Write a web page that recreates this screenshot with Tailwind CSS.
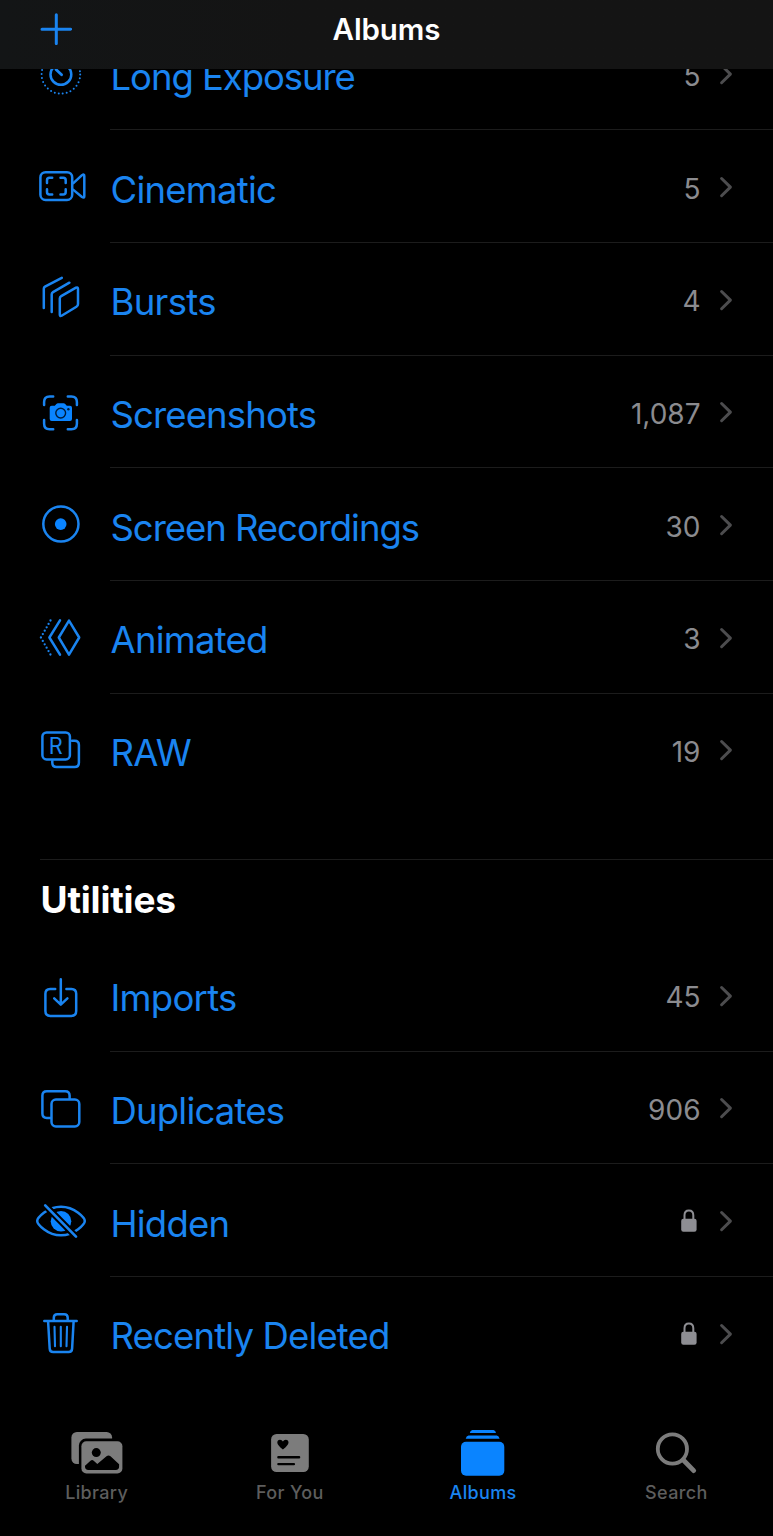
<!DOCTYPE html>
<html lang="en">
<head>
<meta charset="utf-8">
<title>Albums</title>
<script src="https://cdn.jsdelivr.net/npm/@tailwindcss/browser@4"></script>
</head>
<body class="bg-black">
<div class="flex h-[1536px] w-[773px] flex-col overflow-hidden bg-black font-['Inter','Liberation_Sans',sans-serif] text-[#1a84f0]">

  <header class="relative z-10 grid h-[69px] shrink-0 grid-cols-3 items-start bg-linear-to-r from-[#131516] to-[#141414] to-40%">
    <svg class="ml-10 mt-[13px] size-8" viewBox="0 0 32 32" fill="none" stroke="#1a84f0" stroke-width="3" stroke-linecap="round"><path d="M16.3 1.8V30.6M2 16.2H30.6"/></svg>
    <h1 class="mt-[9px] text-center text-[29.5px] leading-10 font-semibold tracking-[-0.1px] text-white">Albums</h1>
  </header>

  <main class="-mt-[51.5px] flex flex-col">
    <ul class="flex flex-col">
      <li class="flex h-[112.7px] pl-[30px]">
        <svg class="mt-[30px] h-[52px] w-[60px]" viewBox="-30 -26 60 52" fill="none" stroke="currentColor" stroke-width="2.5" stroke-linecap="round"><circle cx="0.9" cy="0.4" r="10.4"/><circle cx="0.9" cy="0.4" r="19.3" stroke-width="2" stroke-dasharray="0 4.04"/><path d="M-4-4.6 1.6 0.8" stroke-width="2.8"/></svg>
        <div class="ml-5 flex grow items-center border-b border-[#1c1c1c] pr-[39.5px] pl-[0.5px]">
          <span class="grow pt-[7px] text-[36.5px] leading-[44px] tracking-[-1.06px]">Long Exposure</span>
          <span class="pt-[5px] text-[28px] leading-8 text-[#8b8b8f]">5</span>
          <svg class="ml-[18px] h-6 w-[15px]" viewBox="0 0 15 24" fill="none" stroke="#4c4c4e" stroke-width="3" stroke-linecap="round" stroke-linejoin="round"><path d="M2.6 4.5 11.4 13.1 2.6 21.7"/></svg>
        </div>
      </li>
      <li class="flex h-[112.7px] pl-[30px]">
        <svg class="mt-[30px] h-[52px] w-[60px]" viewBox="-30 -26 60 52" fill="none" stroke="currentColor" stroke-width="2.5" stroke-linecap="round" stroke-linejoin="round"><rect x="-19.6" y="-13.8" width="31.8" height="27.8" rx="5.2"/><path d="M13.4-2.9 22-10.8Q24.3-12.3 24.3-10.1V10.3Q24.3 12.5 22 11L13.4 3.9M-13-3.1V-5.8Q-13-8.3-10.5-8.3H-7.8M0.5-8.3H3.2Q5.7-8.3 5.7-5.8V-3.1M5.7 3.2V5.9Q5.7 8.4 3.2 8.4H0.5M-7.8 8.4H-10.5Q-13 8.4-13 5.9V3.2"/></svg>
        <div class="ml-5 flex grow items-center border-b border-[#1c1c1c] pr-[39.5px] pl-[0.5px]">
          <span class="grow pt-[7px] text-[36.5px] leading-[44px] tracking-[-0.76px]">Cinematic</span>
          <span class="pt-[5px] text-[28px] leading-8 text-[#8b8b8f]">5</span>
          <svg class="ml-[18px] h-6 w-[15px]" viewBox="0 0 15 24" fill="none" stroke="#4c4c4e" stroke-width="3" stroke-linecap="round" stroke-linejoin="round"><path d="M2.6 4.5 11.4 13.1 2.6 21.7"/></svg>
        </div>
      </li>
      <li class="flex h-[112.7px] pl-[30px]">
        <svg class="mt-[30px] h-[52px] w-[60px]" viewBox="-30 -26 60 52" fill="none" stroke="currentColor" stroke-width="2.5" stroke-linecap="round" stroke-linejoin="round"><path d="M1.2-2.8 16-11.3Q18-12.3 18-10.1V4.9Q18 6.7 16.4 7.7L1.6 16.7Q-0.2 17.7-0.2 15.5V-0.5Q-0.2-2 1.2-2.8ZM-8.3 13.1V-4.7Q-8.3-6.1-7-6.9L9.4-16.3M-16.2 9.1V-10.3Q-16.2-11.7-15-12.4L1.8-21.1"/></svg>
        <div class="ml-5 flex grow items-center border-b border-[#1c1c1c] pr-[39.5px] pl-[0.5px]">
          <span class="grow pt-[7px] text-[36.5px] leading-[44px] tracking-[-0.67px]">Bursts</span>
          <span class="pt-[5px] text-[28px] leading-8 text-[#8b8b8f]">4</span>
          <svg class="ml-[18px] h-6 w-[15px]" viewBox="0 0 15 24" fill="none" stroke="#4c4c4e" stroke-width="3" stroke-linecap="round" stroke-linejoin="round"><path d="M2.6 4.5 11.4 13.1 2.6 21.7"/></svg>
        </div>
      </li>
      <li class="flex h-[112.7px] pl-[30px]">
        <svg class="mt-[30px] h-[52px] w-[60px]" viewBox="-30 -26 60 52" fill="none" stroke="currentColor" stroke-width="2.5" stroke-linecap="round"><path d="M-15.9-7V-10.1Q-15.9-15.6-10.4-15.6H-6.8M7.8-15.6H11.4Q16.9-15.6 16.9-10.1V-7M16.9 7.9V11.7Q16.9 17.2 11.4 17.2H7.8M-6.8 17.2H-10.4Q-15.9 17.2-15.9 11.7V7.9"/><path fill="#0a84ff" stroke="none" d="M-8.3-6.2H-5.2L-3.6-8Q-3-8.7-2-8.7H3.6Q4.6-8.7 5.2-8L6.8-6.2H10Q12-6.2 12-4.2V7Q12 9 10 9H-8.3Q-10.3 9-10.3 7V-4.2Q-10.3-6.2-8.3-6.2Z"/><circle cx="0.7" cy="1.1" r="4.9" stroke="#001c3a" stroke-width="1.4"/><circle cx="8.4" cy="-2.8" r="1.2" fill="#001c3a" stroke="none"/></svg>
        <div class="ml-5 flex grow items-center border-b border-[#1c1c1c] pr-[39.5px] pl-[0.5px]">
          <span class="grow pt-[7px] text-[36.5px] leading-[44px] tracking-[-0.87px]">Screenshots</span>
          <span class="pt-[5px] text-[28px] leading-8 text-[#8b8b8f]">1,087</span>
          <svg class="ml-[18px] h-6 w-[15px]" viewBox="0 0 15 24" fill="none" stroke="#4c4c4e" stroke-width="3" stroke-linecap="round" stroke-linejoin="round"><path d="M2.6 4.5 11.4 13.1 2.6 21.7"/></svg>
        </div>
      </li>
      <li class="flex h-[112.7px] pl-[30px]">
        <svg class="mt-[30px] h-[52px] w-[60px]" viewBox="-30 -26 60 52" fill="none" stroke="currentColor" stroke-width="2.5"><circle cx="0.9" cy="0" r="17.6"/><circle cx="0.7" cy="0.1" r="5.8" fill="#0a84ff" stroke="none"/></svg>
        <div class="ml-5 flex grow items-center border-b border-[#1c1c1c] pr-[39.5px] pl-[0.5px]">
          <span class="grow pt-[7px] text-[36.5px] leading-[44px] tracking-[-1.05px]">Screen Recordings</span>
          <span class="pt-[5px] text-[28px] leading-8 text-[#8b8b8f]">30</span>
          <svg class="ml-[18px] h-6 w-[15px]" viewBox="0 0 15 24" fill="none" stroke="#4c4c4e" stroke-width="3" stroke-linecap="round" stroke-linejoin="round"><path d="M2.6 4.5 11.4 13.1 2.6 21.7"/></svg>
        </div>
      </li>
      <li class="flex h-[112.7px] pl-[30px]">
        <svg class="mt-[30px] h-[52px] w-[60px]" viewBox="-30 -26 60 52" fill="none" stroke="currentColor" stroke-width="2.5" stroke-linecap="round" stroke-linejoin="round"><path d="M-1.2 0.5 9-16.4 19.2 0.5 9 17.6ZM0-16.6-10.6 0.5 0 17.7"/><path d="M-9.5-16.5-19.1 0.5-9.5 17.6" stroke-width="2.3" stroke-dasharray="0 3.9"/></svg>
        <div class="ml-5 flex grow items-center border-b border-[#1c1c1c] pr-[39.5px] pl-[0.5px]">
          <span class="grow pt-[7px] text-[36.5px] leading-[44px] tracking-[-0.76px]">Animated</span>
          <span class="pt-[5px] text-[28px] leading-8 text-[#8b8b8f]">3</span>
          <svg class="ml-[18px] h-6 w-[15px]" viewBox="0 0 15 24" fill="none" stroke="#4c4c4e" stroke-width="3" stroke-linecap="round" stroke-linejoin="round"><path d="M2.6 4.5 11.4 13.1 2.6 21.7"/></svg>
        </div>
      </li>
      <li class="flex h-[112.7px] pl-[30px]">
        <svg class="mt-[30px] h-[52px] w-[60px]" viewBox="-30 -26 60 52" fill="none" stroke="currentColor" stroke-width="2.5" stroke-linecap="round"><rect x="-17.6" y="-17.6" width="27.5" height="27" rx="4.2"/><path d="M12-9.3H14.6Q18.9-9.3 18.9-5V12.8Q18.9 17.1 14.6 17.1H-3.4Q-7.7 17.1-7.7 12.8V11"/><text x="-11.2" y="4.4" font-size="22.5" font-weight="400" fill="currentColor" stroke="none" textLength="14" lengthAdjust="spacingAndGlyphs">R</text></svg>
        <div class="ml-5 flex grow items-center border-b border-transparent pr-[39.5px] pl-[0.5px]">
          <span class="grow pt-[7px] text-[36.5px] leading-[44px] tracking-[-0.7px]">RAW</span>
          <span class="pt-[5px] text-[28px] leading-8 text-[#8b8b8f]">19</span>
          <svg class="ml-[18px] h-6 w-[15px]" viewBox="0 0 15 24" fill="none" stroke="#4c4c4e" stroke-width="3" stroke-linecap="round" stroke-linejoin="round"><path d="M2.6 4.5 11.4 13.1 2.6 21.7"/></svg>
        </div>
      </li>
    </ul>

    <h2 class="mt-[52.6px] ml-10 h-[80px] border-t border-[#1c1c1c] pt-[18px] pl-[0.5px] text-[37px] leading-[44px] font-bold tracking-[-0.2px] text-white">Utilities</h2>

    <ul class="flex flex-col">
      <li class="flex h-[112.7px] pl-[30px]">
        <svg class="mt-[30px] h-[52px] w-[60px]" viewBox="-30 -26 60 52" fill="none" stroke="currentColor" stroke-width="2.5" stroke-linecap="round" stroke-linejoin="round"><path d="M-4.8-6H-9.8Q-14.6-6-14.6-1.2V16.1Q-14.6 20.9-9.8 20.9H11.4Q16.2 20.9 16.2 16.1V-1.2Q16.2-6 11.4-6H6.4M0.8-15.8V9.2M-5.8 3.4 0.8 9.6 7.4 3.4"/></svg>
        <div class="ml-5 flex grow items-center border-b border-[#1c1c1c] pr-[39.5px] pl-[0.5px]">
          <span class="grow pt-[7px] text-[36.5px] leading-[44px] tracking-[-0.73px]">Imports</span>
          <span class="pt-[5px] text-[28px] leading-8 text-[#8b8b8f]">45</span>
          <svg class="ml-[18px] h-6 w-[15px]" viewBox="0 0 15 24" fill="none" stroke="#4c4c4e" stroke-width="3" stroke-linecap="round" stroke-linejoin="round"><path d="M2.6 4.5 11.4 13.1 2.6 21.7"/></svg>
        </div>
      </li>
      <li class="flex h-[112.7px] pl-[30px]">
        <svg class="mt-[30px] h-[52px] w-[60px]" viewBox="-30 -26 60 52" fill="none" stroke="currentColor" stroke-width="2.5"><rect x="-8.5" y="-8.5" width="27.8" height="26.9" rx="4.4"/><path d="M-9 9.9H-13.2Q-17.6 9.9-17.6 5.5V-12.4Q-17.6-16.8-13.2-16.8H5.2Q9.6-16.8 9.6-12.4V-9"/></svg>
        <div class="ml-5 flex grow items-center border-b border-[#1c1c1c] pr-[39.5px] pl-[0.5px]">
          <span class="grow pt-[7px] text-[36.5px] leading-[44px] tracking-[-0.8px]">Duplicates</span>
          <span class="pt-[5px] text-[28px] leading-8 text-[#8b8b8f]">906</span>
          <svg class="ml-[18px] h-6 w-[15px]" viewBox="0 0 15 24" fill="none" stroke="#4c4c4e" stroke-width="3" stroke-linecap="round" stroke-linejoin="round"><path d="M2.6 4.5 11.4 13.1 2.6 21.7"/></svg>
        </div>
      </li>
      <li class="flex h-[112.7px] pl-[30px]">
        <svg class="mt-[30px] h-[52px] w-[60px]" viewBox="-30 -26 60 52" fill="none" stroke="currentColor" stroke-width="2.5" stroke-linecap="round"><path d="M-22.8 1C-22.8-1.8-13-13.3 1-13.3S24.8-1.8 24.8 1 15 15.3 1 15.3-22.8 3.8-22.8 1Z"/><circle cx="1" cy="1.2" r="10.3" fill="#0a84ff" stroke="none"/><path d="M-14.8-14.6 16 16.6" stroke="#000" stroke-width="6.6" stroke-linecap="butt"/><path d="M-14.8-14.6 16 16.6" stroke-width="2.7"/></svg>
        <div class="ml-5 flex grow items-center border-b border-[#1c1c1c] pr-[39.5px] pl-[0.5px]">
          <span class="grow pt-[7px] text-[36.5px] leading-[44px] tracking-[-0.8px]">Hidden</span>
          <svg class="h-6 w-5" viewBox="0 0 20 24" fill="none"><rect x="0.2" y="10.8" width="15.4" height="13" rx="2.2" fill="#8e8e93"/><path d="M3.5 12V7.3Q3.5 2.6 7.9 2.6T12.3 7.3V12" stroke="#8e8e93" stroke-width="2"/></svg>
          <svg class="ml-[18px] h-6 w-[15px]" viewBox="0 0 15 24" fill="none" stroke="#4c4c4e" stroke-width="3" stroke-linecap="round" stroke-linejoin="round"><path d="M2.6 4.5 11.4 13.1 2.6 21.7"/></svg>
        </div>
      </li>
      <li class="flex h-[112.7px] pl-[30px]">
        <svg class="mt-[30px] h-[52px] w-[60px]" viewBox="-30 -26 60 52" fill="none" stroke="currentColor" stroke-width="2.5" stroke-linecap="round" stroke-linejoin="round"><path d="M-15.7-12H16.7M-6.2-12.5V-15.2Q-6.2-18.7-2.7-18.7H4.2Q7.7-18.7 7.7-15.2V-12.5M-11.9-11.5-10.3 15.6Q-10.1 19-6.8 19H8.6Q11.9 19 12.1 15.6L13.6-11.5"/><path d="M-5.5-6.2-5 13.2M0.8-6.2V13.2M7-6.2 6.5 13.2" stroke-width="2.1"/></svg>
        <div class="ml-5 flex grow items-center border-b border-transparent pr-[39.5px] pl-[0.5px]">
          <span class="grow pt-[7px] text-[36.5px] leading-[44px] tracking-[-0.85px]">Recently Deleted</span>
          <svg class="h-6 w-5" viewBox="0 0 20 24" fill="none"><rect x="0.2" y="10.8" width="15.4" height="13" rx="2.2" fill="#8e8e93"/><path d="M3.5 12V7.3Q3.5 2.6 7.9 2.6T12.3 7.3V12" stroke="#8e8e93" stroke-width="2"/></svg>
          <svg class="ml-[18px] h-6 w-[15px]" viewBox="0 0 15 24" fill="none" stroke="#4c4c4e" stroke-width="3" stroke-linecap="round" stroke-linejoin="round"><path d="M2.6 4.5 11.4 13.1 2.6 21.7"/></svg>
        </div>
      </li>
    </ul>
  </main>

  <nav class="mt-auto grid h-[110px] shrink-0 grid-cols-4 text-[18px] leading-6 font-medium tracking-[0.35px] text-[#5d5d5d]">
    <a class="flex flex-col items-center">
      <svg class="h-[55px] w-[60px]" viewBox="66.9 1426 60 55"><rect x="71.3" y="1432" width="40.7" height="32" rx="5.5" fill="#7c7c7c"/><rect x="78.8" y="1438.6" width="46" height="38" rx="7" fill="#000"/><rect x="81.3" y="1441.2" width="41" height="32.2" rx="5" fill="#7c7c7c"/><circle cx="96.2" cy="1452.6" r="4.5"/><path d="M84.9 1465.8 90.4 1460.8Q92 1459.4 93.6 1460.8L97.2 1464 106.4 1456.2Q108.4 1454.6 110.4 1456.2L119 1464.2V1466.6Q119 1470 115.6 1470H88.3Q84.9 1470 84.9 1466.6Z"/></svg>
      <span>Library</span>
    </a>
    <a class="flex flex-col items-center">
      <svg class="h-[55px] w-[60px]" viewBox="259.9 1426 60 55"><rect x="271" y="1434" width="37.7" height="38" rx="5.5" fill="#7c7c7c"/><path d="M282.8 1449.4Q277.2 1445.4 277.2 1442.6 277.2 1439.7 279.9 1439.7 281.9 1439.7 282.8 1441.5 283.7 1439.7 285.7 1439.7 288.4 1439.7 288.4 1442.6 288.4 1445.4 282.8 1449.4Z"/><path d="M278.3 1457.3H299M278.3 1464.1H293.8" stroke="#000" stroke-width="2.4" stroke-linecap="round"/></svg>
      <span>For You</span>
    </a>
    <a class="flex flex-col items-center text-[#1a84f0]">
      <svg class="h-[55px] w-[60px]" viewBox="453 1426 60 55" fill="#0a84ff"><rect x="461" y="1441.8" width="43.3" height="34" rx="5"/><path d="M468.5 1435.6H496.8Q499 1436 499.6 1438.8H465.7Q466.3 1436 468.5 1435.6ZM472.3 1430H493.5Q495.6 1430.5 496 1433H469.8Q470.2 1430.5 472.3 1430Z"/></svg>
      <span>Albums</span>
    </a>
    <a class="flex flex-col items-center">
      <svg class="h-[55px] w-[60px]" viewBox="646.1 1426 60 55" fill="none" stroke="#7c7c7c" stroke-linecap="round"><circle cx="672.5" cy="1449" r="14.6" stroke-width="3.8"/><path d="M683.4 1460 693.8 1470.6" stroke-width="4.8"/></svg>
      <span>Search</span>
    </a>
  </nav>
</div>
</body>
</html>
